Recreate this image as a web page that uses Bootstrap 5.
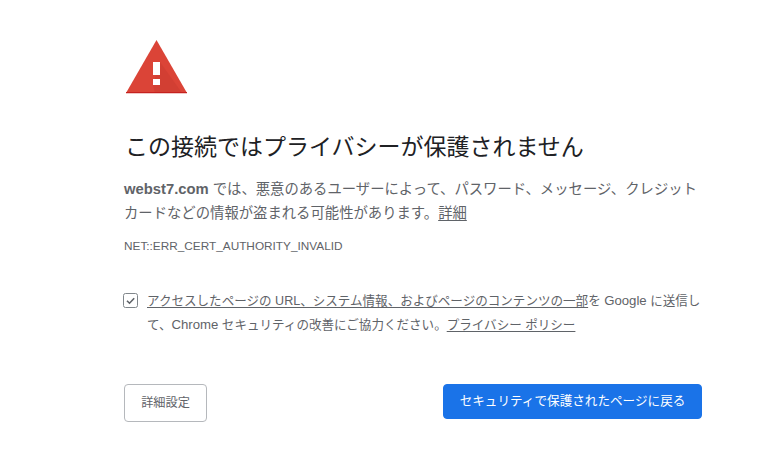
<!doctype html>
<html lang="ja"><head><meta charset="utf-8"><title>プライバシーエラー</title>
<link href="https://cdn.jsdelivr.net/npm/bootstrap@5.3.0/dist/css/bootstrap.min.css" rel="stylesheet">
<style>
html,body{height:455px;overflow:hidden;background:#fff}
body{font-family:"Liberation Sans","Noto Sans CJK JP",sans-serif;color:#5f6368;font-size:14.35px}
.wrap{width:578px;margin-left:124px;padding-top:39px}
.warn{display:block;width:63px;height:55px;margin-left:1px}
.ttl{font-size:23px;font-weight:400;line-height:30px;color:#202124;margin:38px 0 0 1px}
.desc{line-height:24px;margin:15px 0 0}
.desc b{color:#5f6368;font-size:14.8px}
.lnk{color:#5f6368;text-decoration:underline;text-underline-offset:2px}
.code{font-size:11.8px;line-height:14px;margin:14px 0 0}
.opt{margin-top:36px;font-size:12.55px;line-height:24px}
.lat{font-size:13.2px}
.tick{flex:0 0 15px;width:15px;height:15px;margin:4px 9px 0 -1px}
.opt p{margin:0}
.acts{margin-top:47px}
.b1{width:83px;height:38px;font-size:12.2px;color:#5f6368;border:1px solid #b5b8bc;border-radius:4px;background:#fff;padding:0}
.b2{width:259px;height:35px;font-size:12.6px;color:#fff;background:#1a73e8;border:1px solid #1a73e8;border-radius:4px;padding:0}
</style></head>
<body>
<div class="wrap">
<svg class="warn" viewBox="0 0 63 55" aria-hidden="true"><path d="M31.500 1 62 54H1z" fill="#db4437"/><path d="M35 23 57 54H30l-2-8z" fill="#c8392f" opacity=".45"/><path d="M1 53h61v1.200H1z" fill="#c5221f"/><path d="M28 23h7v13h-7zM28 40h7v6h-7z" fill="#fff"/></svg>
<h1 class="ttl">この接続ではプライバシーが保護されません</h1>
<p class="desc"><b>webst7.com</b> では、悪意のあるユーザーによって、パスワード、メッセージ、クレジットカードなどの情報が盗まれる可能性があります。<a class="lnk" href="#">詳細</a></p>
<p class="code">NET::ERR_CERT_AUTHORITY_INVALID</p>
<div class="opt d-flex">
<svg class="tick" viewBox="0 0 15 15" aria-hidden="true"><rect x=".5" y=".5" width="14" height="14" rx="2" fill="#fff" stroke="#80868b"/><path d="M4 7.700 6.500 10.200l4.700-5" fill="none" stroke="#5f6368" stroke-width="1.600"/></svg>
<p><a class="lnk" href="#">アクセスしたページの URL、システム情報、およびページのコンテンツの一部</a>を <span class="lat">Google</span> に送信して、<span class="lat">Chrome</span> セキュリティの改善にご協力ください。<a class="lnk" href="#">プライバシー ポリシー</a></p>
</div>
<div class="acts d-flex justify-content-between align-items-start">
<button class="btn b1" type="button">詳細設定</button>
<button class="btn b2" type="button">セキュリティで保護されたページに戻る</button>
</div>
</div>
<script src="https://cdn.jsdelivr.net/npm/bootstrap@5.3.0/dist/js/bootstrap.bundle.min.js"></script>
</body></html>
